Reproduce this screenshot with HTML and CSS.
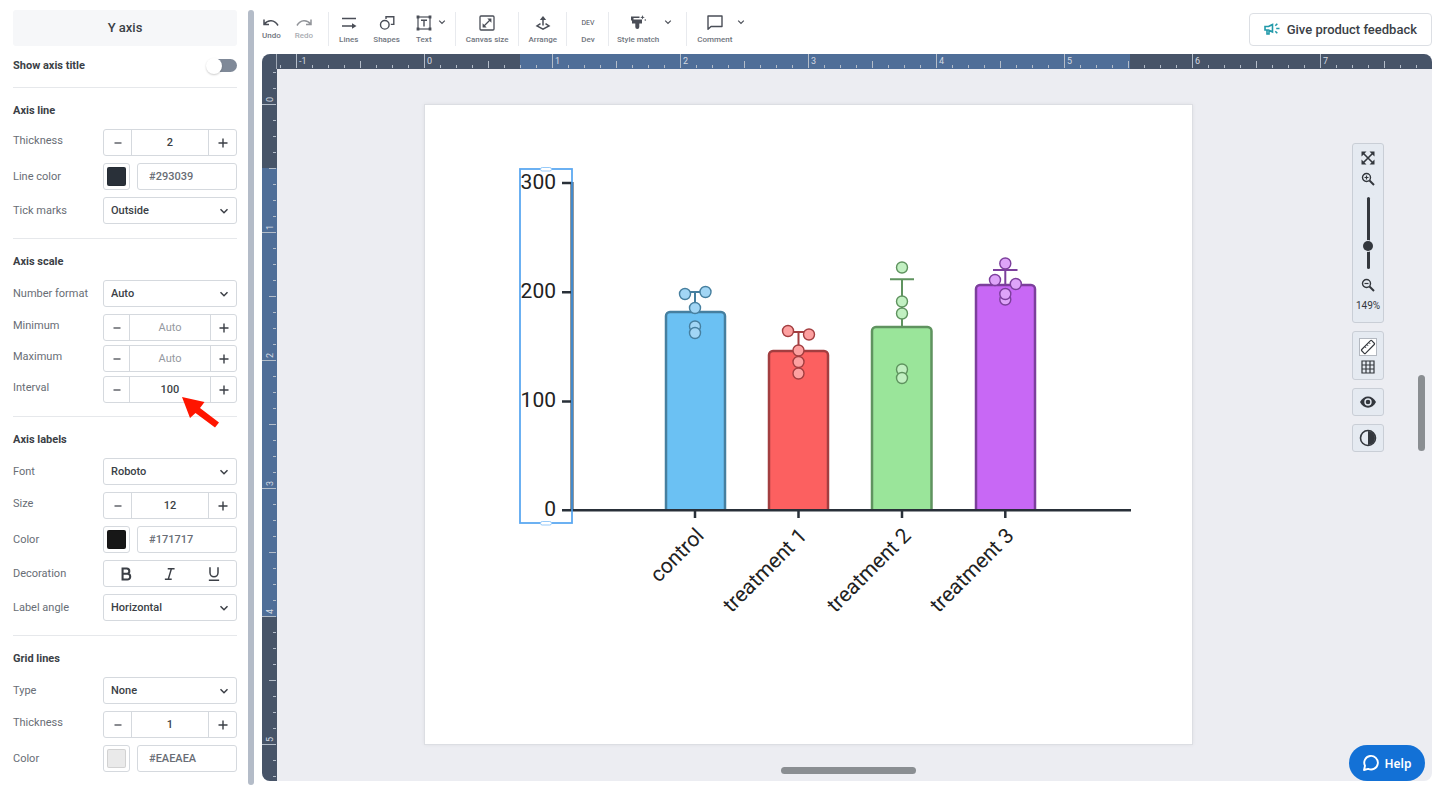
FILE: index.html
```html
<!DOCTYPE html>
<html lang="en">

<head>
    <meta charset="UTF-8">
    <meta name="viewport" content="width=device-width, initial-scale=1.0">
    <title>Graph editor</title>
    <link rel="stylesheet" href="styles.css">
</head>

<body>

    <!-- shared icons -->
    <svg class="sprite" aria-hidden="true">
        <symbol id="chevron" viewBox="0 0 10 10">
            <path d="M1.5 3.2 L5 6.7 L8.5 3.2" fill="none" stroke="currentColor" stroke-width="1.5" />
        </symbol>
        <symbol id="minus" viewBox="0 0 10 10">
            <path d="M1.5 5 H8.5" stroke="currentColor" stroke-width="1.2" />
        </symbol>
        <symbol id="plus" viewBox="0 0 10 10">
            <path d="M0.5 5 H9.5 M5 0.5 V9.5" stroke="currentColor" stroke-width="1.4" />
        </symbol>
    </svg>

    <div class="app">

        <aside class="sidebar">
            <div class="panel">
                <h1 class="panel-title">Y axis</h1>

                <div class="toggle-row">
                    <label for="show-title">Show axis title</label>
                    <input type="checkbox" class="toggle" id="show-title">
                </div>

                <section class="section">
                    <h2>Axis line</h2>
                    <div class="row row-stepper">
                        <label for="line-thickness">Thickness</label>
                        <div class="stepper">
                            <button aria-label="Decrease"><svg><use href="#minus" /></svg></button>
                            <input type="text" id="line-thickness" value="2">
                            <button aria-label="Increase"><svg><use href="#plus" /></svg></button>
                        </div>
                    </div>
                    <div class="row">
                        <label for="line-color">Line color</label>
                        <div class="color">
                            <input type="color" aria-label="Pick line color" value="#293039">
                            <input type="text" id="line-color" value="#293039">
                        </div>
                    </div>
                    <div class="row">
                        <label for="tick-marks">Tick marks</label>
                        <div class="dropdown">
                            <select id="tick-marks"><option>Outside</option></select>
                            <svg><use href="#chevron" /></svg>
                        </div>
                    </div>
                </section>

                <section class="section">
                    <h2>Axis scale</h2>
                    <div class="row">
                        <label for="number-format">Number format</label>
                        <div class="dropdown">
                            <select id="number-format"><option>Auto</option></select>
                            <svg><use href="#chevron" /></svg>
                        </div>
                    </div>
                    <div class="row-group">
                        <div class="row row-stepper">
                            <label for="minimum">Minimum</label>
                            <div class="stepper stepper-wide">
                                <button aria-label="Decrease"><svg><use href="#minus" /></svg></button>
                                <input type="text" id="minimum" placeholder="Auto">
                                <button aria-label="Increase"><svg><use href="#plus" /></svg></button>
                            </div>
                        </div>
                        <div class="row row-stepper">
                            <label for="maximum">Maximum</label>
                            <div class="stepper stepper-wide">
                                <button aria-label="Decrease"><svg><use href="#minus" /></svg></button>
                                <input type="text" id="maximum" placeholder="Auto">
                                <button aria-label="Increase"><svg><use href="#plus" /></svg></button>
                            </div>
                        </div>
                        <div class="row row-stepper">
                            <label for="interval">Interval</label>
                            <div class="stepper stepper-wide">
                                <button aria-label="Decrease"><svg><use href="#minus" /></svg></button>
                                <input type="text" id="interval" value="100">
                                <button aria-label="Increase"><svg><use href="#plus" /></svg></button>
                            </div>
                            <svg class="pointer" viewBox="0 0 38 32">
                                <path d="M1 1 L23.5 6 L19 12 L38 26.5 L34 31.5 L14.5 17 L9 22 Z" fill="#ff1500" />
                            </svg>
                        </div>
                    </div>
                </section>

                <section class="section">
                    <h2>Axis labels</h2>
                    <div class="row">
                        <label for="font">Font</label>
                        <div class="dropdown">
                            <select id="font"><option>Roboto</option></select>
                            <svg><use href="#chevron" /></svg>
                        </div>
                    </div>
                    <div class="row row-stepper">
                        <label for="size">Size</label>
                        <div class="stepper">
                            <button aria-label="Decrease"><svg><use href="#minus" /></svg></button>
                            <input type="text" id="size" value="12">
                            <button aria-label="Increase"><svg><use href="#plus" /></svg></button>
                        </div>
                    </div>
                    <div class="row">
                        <label for="label-color">Color</label>
                        <div class="color">
                            <input type="color" aria-label="Pick label color" value="#171717">
                            <input type="text" id="label-color" value="#171717">
                        </div>
                    </div>
                    <div class="row">
                        <span class="row-label">Decoration</span>
                        <div class="decoration">
                            <button aria-label="Bold">
                                <svg viewBox="0 0 14 14"><path d="M4 2.2 H7.6 A2.3 2.3 0 0 1 7.6 6.8 H4 Z M4 6.8 H8.2 A2.5 2.5 0 0 1 8.2 11.8 H4 Z" fill="none" stroke="currentColor" stroke-width="1.8" /></svg>
                            </button>
                            <button aria-label="Italic">
                                <svg viewBox="0 0 14 14"><path d="M5 2.5 H11 M2.5 11.5 H8.5 M8.2 2.5 L5.5 11.5" fill="none" stroke="currentColor" stroke-width="1.3" /></svg>
                            </button>
                            <button aria-label="Underline">
                                <svg viewBox="0 0 14 14"><path d="M3.5 1 V6 A3.5 3.5 0 0 0 10.5 6 V1 M2.5 12.5 H11.5" fill="none" stroke="currentColor" stroke-width="1.3" /></svg>
                            </button>
                        </div>
                    </div>
                    <div class="row">
                        <label for="label-angle">Label angle</label>
                        <div class="dropdown">
                            <select id="label-angle"><option>Horizontal</option></select>
                            <svg><use href="#chevron" /></svg>
                        </div>
                    </div>
                </section>

                <section class="section">
                    <h2>Grid lines</h2>
                    <div class="row">
                        <label for="grid-type">Type</label>
                        <div class="dropdown">
                            <select id="grid-type"><option>None</option></select>
                            <svg><use href="#chevron" /></svg>
                        </div>
                    </div>
                    <div class="row row-stepper">
                        <label for="grid-thickness">Thickness</label>
                        <div class="stepper">
                            <button aria-label="Decrease"><svg><use href="#minus" /></svg></button>
                            <input type="text" id="grid-thickness" value="1">
                            <button aria-label="Increase"><svg><use href="#plus" /></svg></button>
                        </div>
                    </div>
                    <div class="row">
                        <label for="grid-color">Color</label>
                        <div class="color">
                            <input type="color" aria-label="Pick grid color" value="#eaeaea">
                            <input type="text" id="grid-color" value="#EAEAEA">
                        </div>
                    </div>
                </section>
            </div>
            <div class="sidebar-scroll"></div>
        </aside>

        <main class="main">

            <header class="toolbar">
                <div class="group group-history">
                    <button class="tool">
                        <svg viewBox="0 0 18 16"><path d="M2 4.5 V9.5 H7 M2.3 9.2 C6 4.5 12.5 4.5 16 10.5" fill="none" stroke="currentColor" stroke-width="1.5" /></svg>
                        <span>Undo</span>
                    </button>
                    <button class="tool" disabled>
                        <svg viewBox="0 0 18 16"><path d="M16 4.5 V9.5 H11 M15.7 9.2 C12 4.5 5.5 4.5 2 10.5" fill="none" stroke="currentColor" stroke-width="1.5" /></svg>
                        <span>Redo</span>
                    </button>
                </div>
                <div class="group">
                    <button class="tool">
                        <svg viewBox="0 0 18 16"><path d="M2 3.5 H16 M2 11 H13" fill="none" stroke="currentColor" stroke-width="1.5" /><path d="M12 8.3 L16.5 11 L12 13.7 Z" fill="currentColor" /></svg>
                        <span>Lines</span>
                    </button>
                    <button class="tool">
                        <svg viewBox="0 0 18 16"><circle cx="6.8" cy="9.8" r="4.3" fill="none" stroke="currentColor" stroke-width="1.4" /><path d="M8 4 V1.8 H15.8 V9.4 H12.8" fill="none" stroke="currentColor" stroke-width="1.4" /></svg>
                        <span>Shapes</span>
                    </button>
                    <button class="tool">
                        <svg viewBox="0 0 18 16"><rect x="3" y="2" width="12" height="12" fill="none" stroke="currentColor" stroke-width="1.2" /><path d="M1.6 0.6 h2.8 v2.8 h-2.8 z M13.6 0.6 h2.8 v2.8 h-2.8 z M1.6 12.6 h2.8 v2.8 h-2.8 z M13.6 12.6 h2.8 v2.8 h-2.8 z" fill="currentColor" /><path d="M6 5.3 H12 M9 5.3 V11.5" stroke="currentColor" stroke-width="1.4" /></svg>
                        <span>Text</span>
                    </button>
                    <button class="more" aria-label="More text tools"><svg><use href="#chevron" /></svg></button>
                </div>
                <div class="group">
                    <button class="tool">
                        <svg viewBox="0 0 18 16"><rect x="2" y="1" width="14" height="14" rx="1" fill="none" stroke="currentColor" stroke-width="1.3" /><path d="M5.5 11.5 L12.5 4.5" stroke="currentColor" stroke-width="1.2" /><path d="M9.3 3.6 H13.4 V7.7 Z M4.6 8.3 V12.4 H8.7 Z" fill="currentColor" /></svg>
                        <span>Canvas size</span>
                    </button>
                </div>
                <div class="group">
                    <button class="tool">
                        <svg viewBox="0 0 18 16"><path d="M9 10.5 V3" stroke="currentColor" stroke-width="1.5" /><path d="M5.8 5 L9 1 L12.2 5 Z" fill="currentColor" /><path d="M6.5 8.6 L3 10.9 L9 14.2 L15 10.9 L11.5 8.6" fill="none" stroke="currentColor" stroke-width="1.5" /></svg>
                        <span>Arrange</span>
                    </button>
                </div>
                <div class="group">
                    <button class="tool tool-dev">
                        <b>DEV</b>
                        <span>Dev</span>
                    </button>
                </div>
                <div class="group group-style">
                    <button class="tool">
                        <svg viewBox="0 0 18 16"><path d="M2 1.500 H10.500 V3 H4.500 V4.500 H13 V8.500 H10.300 V12 A2 2 0 0 1 6.300 12 V8.500 H3 V5.500 H2 Z" fill="currentColor" /><path d="M13.500 0 L14.100 1.700 L15.800 2.300 L14.100 2.900 L13.500 4.600 L12.900 2.900 L11.200 2.300 L12.900 1.700 Z" fill="currentColor" /><circle cx="16.300" cy="5" r="0.800" fill="currentColor" /></svg>
                        <span>Style match</span>
                    </button>
                    <button class="more" aria-label="More style tools"><svg><use href="#chevron" /></svg></button>
                </div>
                <div class="group">
                    <button class="tool">
                        <svg viewBox="0 0 18 16"><path d="M2 1 H16 V11.500 H5 L2 14.300 Z" fill="none" stroke="currentColor" stroke-width="1.400" stroke-linejoin="round" /></svg>
                        <span>Comment</span>
                    </button>
                    <button class="more" aria-label="More comment tools"><svg><use href="#chevron" /></svg></button>
                </div>

                <button class="feedback">
                    <svg viewBox="0 0 16 14"><path d="M1 4.500 H4.500 L8.500 2.500 V10 L4.500 8 H1 Z M3 8 V12 H5 V8" fill="none" stroke="currentColor" stroke-width="1.600" /><path d="M11.300 3.800 L13.300 1.800 M12.200 6.500 H15.500 M11.300 9.200 L13.300 11.200" stroke="currentColor" stroke-width="1.600" /></svg>
                    Give product feedback
                </button>
            </header>

            <div class="workspace">
                <div class="ruler-corner"></div>

                <svg class="ruler">
                    <defs>
                        <pattern id="ticks-x" x="147" y="0" width="128" height="15" patternUnits="userSpaceOnUse">
                            <path d="M0.5 0 V14 M16.5 11 V14 M32.5 11 V14 M48.5 11 V14 M64.5 7 V14 M80.5 11 V14 M96.5 11 V14 M112.5 11 V14" class="tick" />
                        </pattern>
                    </defs>
                    <rect x="243" width="610" height="15" class="ruler-range" />
                    <rect width="100%" height="15" fill="url(#ticks-x)" />
                    <text x="22" y="10">-1</text>
                    <text x="150" y="10">0</text>
                    <text x="278" y="10">1</text>
                    <text x="406" y="10">2</text>
                    <text x="534" y="10">3</text>
                    <text x="662" y="10">4</text>
                    <text x="790" y="10">5</text>
                    <text x="918" y="10">6</text>
                    <text x="1046" y="10">7</text>
                </svg>

                <svg class="ruler">
                    <defs>
                        <pattern id="ticks-y" x="0" y="35" width="15" height="128" patternUnits="userSpaceOnUse">
                            <path d="M0 0.5 H14 M11 16.5 H14 M11 32.5 H14 M11 48.5 H14 M7 64.5 H14 M11 80.5 H14 M11 96.5 H14 M11 112.5 H14" class="tick" />
                        </pattern>
                    </defs>
                    <rect y="99" width="15" height="449" class="ruler-range" />
                    <rect width="15" height="100%" fill="url(#ticks-y)" />
                    <text transform="translate(11 33) rotate(-90)">0</text>
                    <text transform="translate(11 161) rotate(-90)">1</text>
                    <text transform="translate(11 289) rotate(-90)">2</text>
                    <text transform="translate(11 417) rotate(-90)">3</text>
                    <text transform="translate(11 545) rotate(-90)">4</text>
                    <text transform="translate(11 673) rotate(-90)">5</text>
                </svg>

                <div class="stage">
                    <div class="artboard">
                        <svg class="chart" viewBox="0 0 768 640">
                            <!-- bars -->
                            <g class="control">
                                <path class="bar" d="M242 406 V212 a4 4 0 0 1 4 -4 H297 a4 4 0 0 1 4 4 V406" />
                                <path class="error" d="M259 188 H283 M271 188 V208" />
                                <circle cx="261" cy="190" r="5.5" />
                                <circle cx="281.5" cy="188" r="5.5" />
                                <circle cx="271" cy="204" r="5.5" />
                                <circle cx="271" cy="222.5" r="5.5" />
                                <circle cx="271" cy="229" r="5.5" />
                            </g>
                            <g class="treatment-1">
                                <path class="bar" d="M345 406 V251 a4 4 0 0 1 4 -4 H400 a4 4 0 0 1 4 4 V406" />
                                <path class="error" d="M363 228 H387 M374.5 228 V247" />
                                <circle cx="364" cy="227" r="5.5" />
                                <circle cx="385" cy="230.5" r="5.5" />
                                <circle cx="374.5" cy="246.5" r="5.5" />
                                <circle cx="374.5" cy="258" r="5.5" />
                                <circle cx="374.5" cy="269.5" r="5.5" />
                            </g>
                            <g class="treatment-2">
                                <path class="bar" d="M448 406 V227 a4 4 0 0 1 4 -4 H503.5 a4 4 0 0 1 4 4 V406" />
                                <path class="error" d="M466 175.3 H490 M478 175 V223" />
                                <circle cx="478" cy="163.5" r="5.5" />
                                <circle cx="478" cy="197.5" r="5.5" />
                                <circle cx="478" cy="209.5" r="5.5" />
                                <circle cx="478" cy="265.5" r="5.5" />
                                <circle cx="478" cy="274" r="5.5" />
                            </g>
                            <g class="treatment-3">
                                <path class="bar" d="M552 406 V185 a4 4 0 0 1 4 -4 H607 a4 4 0 0 1 4 4 V406" />
                                <path class="error" d="M569 166 H593.5 M581.3 166 V181" />
                                <circle cx="581.3" cy="159.5" r="5.5" />
                                <circle cx="571" cy="176" r="5.5" />
                                <circle cx="591.8" cy="180" r="5.5" />
                                <circle cx="581.3" cy="195.5" r="5.5" />
                                <circle cx="581.3" cy="190" r="5.5" />
                            </g>

                            <!-- axes -->
                            <path class="axis" d="M138 79 H148 M138 188.3 H148 M138 297.5 H148 M138 406.3 H707 M271 406 V414 M374.5 406 V414 M478 406 V414 M581.3 406 V414" />
                            <path class="axis axis-selected" d="M148 78 V406" />

                            <g class="tick-labels">
                                <text x="132" y="85">300</text>
                                <text x="132" y="194">200</text>
                                <text x="132" y="303">100</text>
                                <text x="132" y="412">0</text>
                                <text transform="translate(281 433) rotate(-45)">control</text>
                                <text transform="translate(384 433) rotate(-45)">treatment 1</text>
                                <text transform="translate(488 433) rotate(-45)">treatment 2</text>
                                <text transform="translate(591 433) rotate(-45)">treatment 3</text>
                            </g>

                            <!-- selected y axis -->
                            <g class="selection">
                                <rect x="96" y="65" width="52" height="354" />
                                <rect class="handle" x="116.5" y="63.5" width="11" height="3.5" rx="1.7" />
                                <rect class="handle" x="116.5" y="417.5" width="11" height="3.5" rx="1.7" />
                            </g>
                        </svg>
                    </div>
                </div>

                <div class="view-tools">
                    <div class="card card-zoom">
                        <button aria-label="Fit to screen">
                            <svg viewBox="0 0 14 14"><path d="M2 2 L12 12 M12 2 L2 12" stroke="currentColor" stroke-width="1.6" /><path d="M0.5 0.5 H5.5 L0.5 5.5 Z M13.5 0.5 V5.5 L8.5 0.5 Z M0.5 13.5 V8.5 L5.5 13.5 Z M13.5 13.5 H8.5 L13.5 8.5 Z" fill="currentColor" /></svg>
                        </button>
                        <button aria-label="Zoom in">
                            <svg viewBox="0 0 14 14"><circle cx="5.5" cy="5.5" r="4" fill="none" stroke="currentColor" stroke-width="1.4" /><path d="M8.5 8.5 L13 13" stroke="currentColor" stroke-width="1.9" /><path d="M3.5 5.5 H7.5 M5.5 3.5 V7.5" stroke="currentColor" stroke-width="1.2" /></svg>
                        </button>
                        <input type="range" class="zoom-slider" min="0" max="100" value="29" aria-label="Zoom">
                        <button aria-label="Zoom out">
                            <svg viewBox="0 0 14 14"><circle cx="5.5" cy="5.5" r="4" fill="none" stroke="currentColor" stroke-width="1.4" /><path d="M8.5 8.5 L13 13" stroke="currentColor" stroke-width="1.9" /><path d="M3.5 5.5 H7.5" stroke="currentColor" stroke-width="1.2" /></svg>
                        </button>
                        <span class="zoom-value">149%</span>
                    </div>
                    <div class="card card-pair">
                        <button class="active" aria-label="Rulers">
                            <svg viewBox="0 0 18 18"><rect x="1" y="6" width="16" height="6" rx="1" transform="rotate(-45 9 9)" fill="none" stroke="currentColor" stroke-width="1.3" /><path d="M5.3 8.5 L7 10.2 M7.6 6.200 L9.3 7.900 M9.9 3.900 L11.6 5.600" stroke="currentColor" stroke-width="1" /></svg>
                        </button>
                        <button aria-label="Grid">
                            <svg viewBox="0 0 14 14"><path d="M1 1 H13 V13 H1 Z M5 1 V13 M9 1 V13 M1 5 H13 M1 9 H13" fill="none" stroke="currentColor" stroke-width="1.2" /></svg>
                        </button>
                    </div>
                    <div class="card">
                        <button aria-label="Preview">
                            <svg class="wide" viewBox="0 0 18 14"><path d="M1 7 C4.5 -0.5 13.5 -0.5 17 7 C13.5 14.5 4.5 14.5 1 7 Z" fill="currentColor" /><circle cx="9" cy="7" r="3" fill="none" stroke="#e5eaf1" stroke-width="1.4" /></svg>
                        </button>
                    </div>
                    <div class="card">
                        <button aria-label="Contrast">
                            <svg class="wide" viewBox="0 0 18 18"><circle cx="9" cy="9" r="7.5" fill="none" stroke="currentColor" stroke-width="1.6" /><path d="M9 2 A7 7 0 0 1 9 16 Z" fill="currentColor" /></svg>
                        </button>
                    </div>
                </div>

                <div class="scroll-x"></div>
                <div class="scroll-y"></div>

                <button class="help">
                    <svg viewBox="0 0 18 18"><path d="M2 16 L3 11.8 A6.8 6.8 0 1 1 6.2 14.9 Z" fill="none" stroke="currentColor" stroke-width="1.9" stroke-linejoin="round" /></svg>
                    Help
                </button>
            </div>
        </main>

    </div>

</body>

</html>
```
FILE: styles.css
```css
* {
    margin: 0;
    padding: 0;
    box-sizing: border-box;
}

body {
    font-family: Roboto, "Liberation Sans", sans-serif;
    font-size: 11px;
    color: #3b3f46;
    background-color: #fff;
}

button,
input,
select {
    font: inherit;
    color: inherit;
    border: none;
    background: none;
}

button {
    display: flex;
    align-items: center;
    justify-content: center;
    cursor: pointer;
}

.sprite {
    display: none;
}

.app {
    display: flex;
    gap: 8px;
    min-height: 100vh;
    padding-right: 8px;
    border-top: 4px solid #f3f5f7;
    border-image: linear-gradient(#fff 50%, #f1f3f5 50%) 4;
}

/* sidebar */

.sidebar {
    display: flex;
    width: 254px;
    padding: 6px 0 5px 13px;
}

.panel {
    flex: 1;
    margin-right: 11px;
}

.sidebar-scroll {
    width: 6px;
    border-radius: 3px;
    background-color: #b4bcc8;
}

.panel-title {
    height: 36px;
    line-height: 36px;
    font-size: 13px;
    font-weight: 500;
    text-align: center;
    border-radius: 3px;
    background-color: #f6f7f9;
}

.toggle-row {
    display: flex;
    align-items: center;
    justify-content: space-between;
    height: 41px;
    padding-bottom: 3px;
    font-weight: 700;
}

.toggle {
    appearance: none;
    position: relative;
    width: 28px;
    height: 13px;
    border-radius: 7px;
    background-color: #7f8998;
}

.toggle::before {
    content: "";
    position: absolute;
    left: -3px;
    top: -1px;
    width: 16px;
    height: 16px;
    border-radius: 50%;
    background-color: #fff;
    box-shadow: 0 1px 2px rgba(0, 0, 0, 0.2);
}

.section {
    padding: 15px 0 14px;
    border-top: 1px solid #e6e8eb;
}

.section:last-child {
    padding-bottom: 0;
}

.section h2 {
    margin-bottom: 10px;
    font-size: 11px;
    line-height: 16px;
    font-weight: 700;
}

.row {
    position: relative;
    display: flex;
    align-items: center;
    justify-content: space-between;
    height: 27px;
    margin-bottom: 7px;
    color: #686d75;
}

.row:last-child {
    margin-bottom: 0;
}

.row-group {
    margin-bottom: -1px;
}

.row-group .row {
    margin-bottom: 4px;
}

.row-group .row:last-child {
    margin-bottom: 0;
}

.row-stepper label {
    padding-bottom: 4px;
}

.stepper,
.dropdown,
.color,
.decoration {
    width: 134px;
    height: 27px;
}

.stepper,
.dropdown,
.decoration,
.color input {
    border: 1px solid #d5d9de;
    border-radius: 3px;
}

.stepper {
    display: flex;
    color: #3b3f46;
}

.stepper button {
    width: 27px;
}

.stepper-wide button {
    width: 25px;
}

.stepper input {
    flex: 1;
    min-width: 0;
    text-align: center;
    font-weight: 500;
    border-left: 1px solid #d5d9de;
    border-right: 1px solid #d5d9de;
}

.stepper input::placeholder {
    color: #95999f;
    font-weight: 400;
}

.stepper svg,
.dropdown svg {
    width: 10px;
    height: 10px;
}

.dropdown {
    position: relative;
    color: #3b3f46;
}

.dropdown select {
    appearance: none;
    width: 100%;
    height: 100%;
    padding-left: 7px;
    font-weight: 500;
}

.dropdown svg {
    position: absolute;
    right: 7px;
    top: 8px;
    pointer-events: none;
}

.color {
    display: flex;
    gap: 7px;
}

.color input[type="color"] {
    width: 27px;
    height: 27px;
    padding: 3px;
}

.color input[type="color"]::-webkit-color-swatch-wrapper {
    padding: 0;
}

.color input[type="color"]::-webkit-color-swatch {
    border: 1px solid rgba(0, 0, 0, 0.1);
    border-radius: 2px;
}

.color input[type="text"] {
    flex: 1;
    min-width: 0;
    padding-left: 11px;
    font-weight: 500;
}

.decoration {
    display: flex;
    justify-content: space-around;
    color: #3b3f46;
}

.decoration svg {
    width: 16px;
    height: 16px;
}

/* arrow drawn over the interval field */
.pointer {
    position: absolute;
    left: 168px;
    top: 20px;
    width: 38px;
    height: 32px;
    z-index: 1;
}

/* toolbar */

.main {
    flex: 1;
    display: flex;
    flex-direction: column;
    min-width: 0;
    padding-bottom: 9px;
}

.toolbar {
    display: flex;
    align-items: center;
    height: 50px;
}

.group {
    display: flex;
    align-items: flex-start;
    gap: 15px;
    height: 34px;
    padding: 3px 9px 0 10px;
    border-left: 1px solid #e8eaee;
    color: #4a4e57;
}

.group-history {
    gap: 14px;
    padding-left: 0;
    padding-right: 15px;
    border-left: none;
}

.group-style {
    padding-left: 8px;
    padding-right: 14px;
}

.tool {
    flex-direction: column;
    gap: 4px;
}

.group-history .tool {
    gap: 0;
}

.tool:disabled {
    opacity: 0.6;
}

.tool svg {
    width: 18px;
    height: 16px;
}

.tool span {
    font-size: 8px;
    line-height: 10px;
    font-weight: 500;
    color: #70757e;
    white-space: nowrap;
}

.tool-dev {
    min-width: 22px;
}

.tool-dev b {
    height: 16px;
    font-size: 7px;
    line-height: 16px;
    font-weight: 400;
}

.more {
    height: 14px;
    margin-left: -10px;
}

.more svg {
    width: 8px;
    height: 8px;
}

.feedback {
    height: 33px;
    margin-left: auto;
    padding: 0 14px;
    gap: 7px;
    font-size: 13px;
    font-weight: 500;
    border: 1px solid #dcdfe4;
    border-radius: 4px;
    white-space: nowrap;
}

.feedback svg {
    width: 16px;
    height: 14px;
    color: #229aaa;
}

/* workspace */

.workspace {
    flex: 1;
    position: relative;
    display: grid;
    grid-template-columns: 15px 1fr;
    grid-template-rows: 15px 1fr;
    border-radius: 8px;
    overflow: hidden;
    background-color: #ecedf2;
}

.ruler-corner {
    background-color: #475468;
    border-right: 1px solid #9fa8b5;
}

.ruler {
    width: 100%;
    height: 100%;
    background-color: #475468;
}

.ruler text {
    font-size: 9px;
    fill: #d5dae2;
}

.ruler-range {
    fill: #4f6e98;
}

.tick {
    stroke: #b4bdc9;
    stroke-width: 1;
}

.stage {
    padding: 35px 0 0 147px;
    min-width: 0;
    overflow: hidden;
}

.artboard {
    width: 769px;
    height: 641px;
    border: 1px solid #dcdee3;
    background-color: #fff;
    box-shadow: 0 0 4px rgba(0, 0, 0, 0.06);
}

.chart {
    display: block;
    width: 768px;
    height: 640px;
    margin: -1px;
}

.bar {
    stroke-width: 2.5;
}

.error {
    fill: none;
    stroke-width: 2;
}

.chart circle {
    stroke-width: 1.4;
}

.control {
    fill: #6bc1f3;
    stroke: #467f9f;
}

.control circle {
    fill: #a2d6f5;
}

.treatment-1 {
    fill: #fc6060;
    stroke: #a33e40;
}

.treatment-1 circle {
    fill: #fda0a0;
}

.treatment-2 {
    fill: #9ae59a;
    stroke: #5f935f;
}

.treatment-2 circle {
    fill: #c2f0c2;
}

.treatment-3 {
    fill: #c868f5;
    stroke: #7c3f9c;
}

.treatment-3 circle {
    fill: #dea4f9;
}

.axis {
    fill: none;
    stroke: #293039;
    stroke-width: 2.5;
}

.axis-selected {
    stroke-width: 3;
}

.tick-labels {
    font-size: 21px;
    fill: #222;
    text-anchor: end;
}

.selection rect {
    fill: none;
    stroke: #4a9ff0;
    stroke-width: 1.8;
    stroke-opacity: 0.9;
}

.selection .handle {
    fill: #fff;
    stroke: #8cc4f8;
    stroke-width: 1;
}

/* floating view controls */

.view-tools {
    position: absolute;
    top: 89px;
    right: 48px;
    display: flex;
    flex-direction: column;
    gap: 8px;
    width: 32px;
    color: #33373d;
}

.card {
    display: flex;
    flex-direction: column;
    align-items: center;
    justify-content: center;
    gap: 4px;
    padding: 4px 0;
    border: 1px solid #c9ced6;
    border-radius: 3px;
    background-color: #e5eaf1;
}

.card-zoom {
    gap: 7px;
    padding: 7px 0 9px;
}

.card-pair {
    min-height: 49px;
}

.card svg {
    width: 14px;
    height: 14px;
}

.card svg.wide {
    width: 18px;
    height: 18px;
}

.card .active {
    border: 1px solid #b3b8c0;
    background-color: #fff;
}

.card .active svg {
    width: 16px;
    height: 16px;
}

.zoom-slider {
    appearance: none;
    writing-mode: vertical-lr;
    direction: rtl;
    width: 12px;
    height: 72px;
    margin: 4px 0 2px;
}

.zoom-slider::-webkit-slider-runnable-track {
    width: 3px;
    border-radius: 2px;
    background-color: #33373d;
}

.zoom-slider::-webkit-slider-thumb {
    appearance: none;
    width: 10px;
    height: 10px;
    margin-left: -4px;
    border-radius: 50%;
    background-color: #33373d;
    box-shadow: 0 0 0 1px #e5eaf1;
}

.zoom-value {
    font-size: 10px;
    line-height: 14px;
}

.scroll-x {
    position: absolute;
    left: 519px;
    bottom: 7px;
    width: 135px;
    height: 7px;
    border-radius: 4px;
    background-color: #8a8e92;
}

.scroll-y {
    position: absolute;
    right: 7px;
    top: 321px;
    width: 7px;
    height: 76px;
    border-radius: 4px;
    background-color: #8a8e92;
}

.help {
    position: absolute;
    right: 7px;
    bottom: 0;
    gap: 4px;
    width: 76px;
    height: 36px;
    font-family: "Noto Sans", sans-serif;
    font-size: 12px;
    font-weight: 600;
    color: #fff;
    border-radius: 18px;
    background-color: #1371d6;
}

.help svg {
    width: 18px;
    height: 18px;
}
```
